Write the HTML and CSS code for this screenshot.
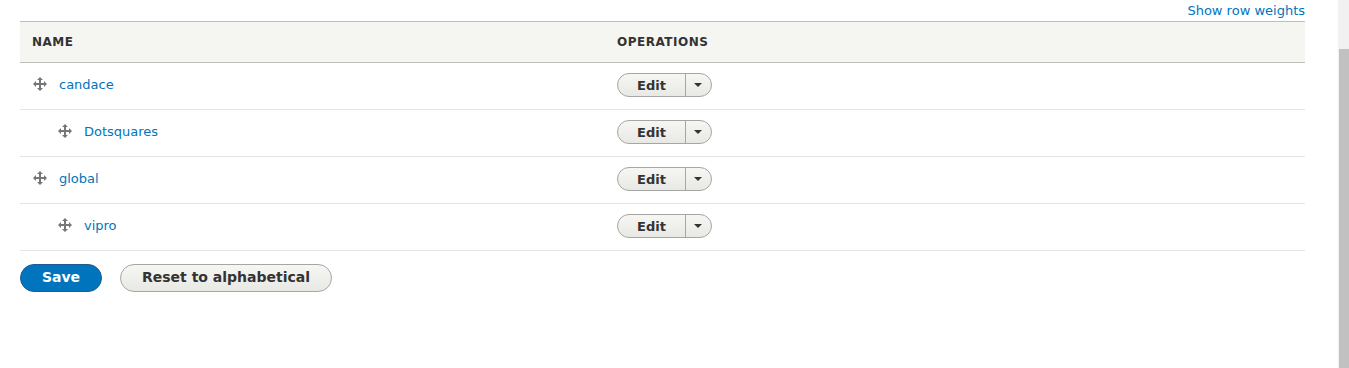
FILE: index.html
```html
<!DOCTYPE html>
<html>
<head>
<meta charset="utf-8">
<link rel="stylesheet" href="styles.css">
</head>
<body>
<div class="page">
  <main class="content">
    <div class="weights"><a href="#">Show row weights</a></div>
    <table class="tbl">
      <thead>
        <tr><th class="c-name">Name</th><th>Operations</th></tr>
      </thead>
      <tbody>
        <tr><td><span class="cell d0"><svg class="handle" viewBox="0 0 14 14"><path d="M7 0 L10 3 H8 V6 H11 V4 L14 7 L11 10 V8 H8 V11 H10 L7 14 L4 11 H6 V8 H3 V10 L0 7 L3 4 V6 H6 V3 H4 Z"/></svg><a href="#">candace</a></span></td><td><div class="drop"><span class="edit">Edit</span><span class="tog"><span class="tri"></span></span></div></td></tr>
        <tr><td><span class="cell d1"><svg class="handle" viewBox="0 0 14 14"><path d="M7 0 L10 3 H8 V6 H11 V4 L14 7 L11 10 V8 H8 V11 H10 L7 14 L4 11 H6 V8 H3 V10 L0 7 L3 4 V6 H6 V3 H4 Z"/></svg><a href="#">Dotsquares</a></span></td><td><div class="drop"><span class="edit">Edit</span><span class="tog"><span class="tri"></span></span></div></td></tr>
        <tr><td><span class="cell d0"><svg class="handle" viewBox="0 0 14 14"><path d="M7 0 L10 3 H8 V6 H11 V4 L14 7 L11 10 V8 H8 V11 H10 L7 14 L4 11 H6 V8 H3 V10 L0 7 L3 4 V6 H6 V3 H4 Z"/></svg><a href="#">global</a></span></td><td><div class="drop"><span class="edit">Edit</span><span class="tog"><span class="tri"></span></span></div></td></tr>
        <tr><td><span class="cell d1"><svg class="handle" viewBox="0 0 14 14"><path d="M7 0 L10 3 H8 V6 H11 V4 L14 7 L11 10 V8 H8 V11 H10 L7 14 L4 11 H6 V8 H3 V10 L0 7 L3 4 V6 H6 V3 H4 Z"/></svg><a href="#">vipro</a></span></td><td><div class="drop"><span class="edit">Edit</span><span class="tog"><span class="tri"></span></span></div></td></tr>
      </tbody>
    </table>
    <div class="actions">
      <button class="btn primary">Save</button>
      <button class="btn">Reset to alphabetical</button>
    </div>
  </main>
  <div class="scrollbar"><div class="thumb"></div></div>
</div>
</body>
</html>
```
FILE: styles.css
```css
html, body { margin: 0; padding: 0; }
body { font-family: "DejaVu Sans", sans-serif; font-size: 13px; color: #222330; background: #fff; }
.page { display: flex; height: 368px; overflow: hidden; }
.content { flex: 1; padding: 0 33px 0 20px; }
.scrollbar { width: 11px; background: #f1f1f1; display: flex; flex-direction: column; padding-top: 49px; }
.thumb { flex: 1; background: #c1c1c1; margin-left: 1px; }
a { color: #0074bd; text-decoration: none; }
.weights { text-align: right; height: 21px; line-height: 21px; }
.tbl { width: 100%; border-collapse: collapse; }
.tbl th { background: #f5f5f2; border-top: 1px solid #bfbfba; border-bottom: 1px solid #bfbfba; text-align: left; text-transform: uppercase; font-size: 12px; font-weight: bold; letter-spacing: 0.5px; height: 40px; padding: 0 12px; color: #333; }
.tbl th.c-name { width: 561px; }
.tbl td { border-bottom: 1px solid #e6e4df; height: 44px; padding: 0 12px 2px; vertical-align: middle; }
.cell { display: flex; align-items: center; padding-bottom: 2px; }
.cell.d1 { padding-left: 25px; }
.handle { width: 14px; height: 14px; fill: #777; margin-right: 12px; margin-left: 1px; }
.drop { display: inline-flex; height: 24px; box-sizing: border-box; border: 1px solid #a6a6a6; border-radius: 12px; background: linear-gradient(#f6f6f3, #e8e8e4); align-items: stretch; vertical-align: middle; }
.edit { width: 67px; display: flex; align-items: center; justify-content: center; font-weight: bold; font-size: 13px; color: #333; border-right: 1px solid #a6a6a6; }
.tog { width: 25px; display: flex; align-items: center; justify-content: center; }
.tri { width: 0; height: 0; border-left: 4px solid transparent; border-right: 4px solid transparent; border-top: 4px solid #333; margin-right: 2px; }
.actions { display: flex; gap: 18px; padding-top: 13px; }
.btn { font-family: "DejaVu Sans", sans-serif; font-size: 14px; font-weight: bold; height: 28px; line-height: 16px; border-radius: 14px; border: 1px solid #a6a6a6; background: linear-gradient(#f6f6f3, #e8e8e4); color: #333; padding: 0 21px 3px; }
.btn.primary { background: #0074bd; border-color: #1e5c90; color: #fff; width: 82px; padding: 0 0 3px; }
```
